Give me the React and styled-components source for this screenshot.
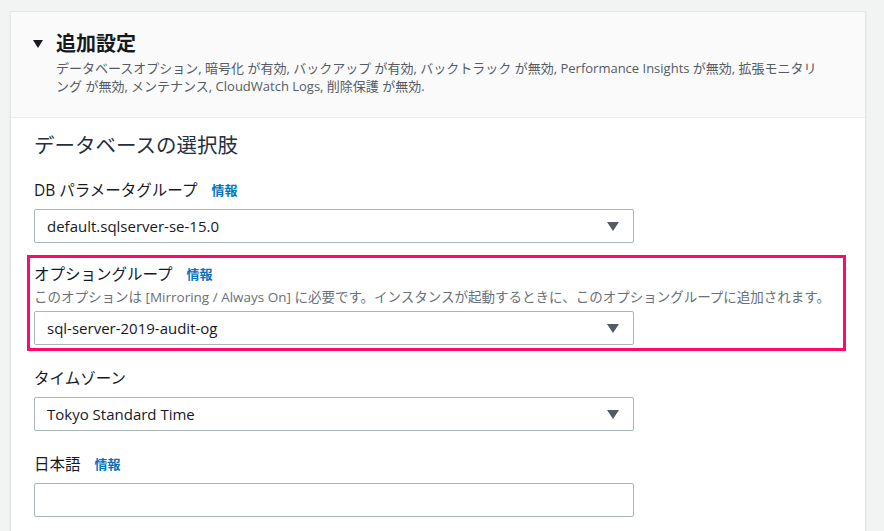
import React from "react";
import styled, { createGlobalStyle } from "styled-components";

const GlobalStyle = createGlobalStyle`
  body {
    margin: 0;
    background: #f2f3f3;
    font-family: "Open Sans", "Noto Sans CJK JP", sans-serif;
    color: #16191f;
  }
`;

const Page = styled.div`
  padding: 11px 0 0 10px;
  height: 520px;
  overflow: hidden;
`;

const Panel = styled.section`
  width: 856px;
  background: #fff;
  box-sizing: border-box;
  border: 1px solid #e3e6e6;
  border-bottom: none;
  box-shadow: 0 1px 1px 0 rgba(0, 28, 36, 0.15);
`;

const PanelHeader = styled.div`
  background: #fafafa;
  border-bottom: 1px solid #eaeded;
  padding: 20px 20px 22px 22px;
`;

const TitleRow = styled.div`
  display: flex;
  align-items: center;
  gap: 13px;
`;

const Title = styled.h2`
  margin: 0;
  font-size: 20px;
  line-height: 24px;
  font-weight: 700;
`;

const Summary = styled.p`
  margin: 3px 0 0 23px;
  font-size: 13px;
  line-height: 18px;
  color: #545b64;
`;

const PanelBody = styled.div`
  padding: 13px 19px 24px 23px;
  display: flex;
  flex-direction: column;
`;

const SectionHeading = styled.h3`
  margin: 0;
  font-size: 20.5px;
  line-height: 28px;
  font-weight: 400;
  color: #232f3e;
`;

const Field = styled.div`
  margin-top: ${(p) => p.$gap}px;
  ${(p) =>
    p.$highlight &&
    `
    margin-left: -7px;
    padding: 6px 4px 3px 4px;
    border: 3px solid #ff0a6c;
  `}
`;

const Label = styled.div`
  display: flex;
  align-items: center;
  font-size: 15.5px;
  line-height: 20px;
  margin-bottom: ${(p) => (p.$tight ? 4 : 9)}px;
`;

const Info = styled.a`
  margin-left: 14px;
  font-size: 13px;
  font-weight: 700;
  color: #0073bb;
  text-decoration: none;
`;

const Hint = styled.div`
  font-size: 13.5px;
  line-height: 18px;
  color: #687078;
  margin-bottom: 5px;
  white-space: nowrap;
`;

const SelectBox = styled.div`
  width: 600px;
  height: 34px;
  box-sizing: border-box;
  border: 1px solid #aab7b8;
  border-radius: 2px;
  background: #fff;
  display: flex;
  align-items: center;
  justify-content: space-between;
  padding: 0 14px 0 12px;
  font-size: 15px;
  color: #16191f;
`;

const Caret = () => (
  <svg width="12" height="9" viewBox="0 0 12 9">
    <polygon points="0,0 12,0 6,9" fill="#545b64" />
  </svg>
);

const Toggle = () => (
  <svg width="10" height="8" viewBox="0 0 10 8">
    <polygon points="0,0 10,0 5,8" fill="#16191f" />
  </svg>
);

const Select = ({ value }) => (
  <SelectBox>
    <span>{value}</span>
    <Caret />
  </SelectBox>
);

export default function App() {
  return (
    <Page>
      <GlobalStyle />
      <Panel>
        <PanelHeader>
          <TitleRow>
            <Toggle />
            <Title>追加設定</Title>
          </TitleRow>
          <Summary>
            データベースオプション, 暗号化 が有効, バックアップ が有効, バックトラック が無効, Performance Insights が無効, 拡張モニタリ
            <br />
            ング が無効, メンテナンス, CloudWatch Logs, 削除保護 が無効.
          </Summary>
        </PanelHeader>
        <PanelBody>
          <SectionHeading>データベースの選択肢</SectionHeading>

          <Field $gap={21}>
            <Label>
              DB パラメータグループ<Info href="#">情報</Info>
            </Label>
            <Select value="default.sqlserver-se-15.0" />
          </Field>

          <Field $gap={12} $highlight>
            <Label $tight>
              オプショングループ<Info href="#">情報</Info>
            </Label>
            <Hint>
              このオプションは [Mirroring / Always On] に必要です。インスタンスが起動するときに、このオプショングループに追加されます。
            </Hint>
            <Select value="sql-server-2019-audit-og" />
          </Field>

          <Field $gap={17}>
            <Label>タイムゾーン</Label>
            <Select value="Tokyo Standard Time" />
          </Field>

          <Field $gap={23}>
            <Label>
              日本語<Info href="#">情報</Info>
            </Label>
            <SelectBox />
          </Field>
        </PanelBody>
      </Panel>
    </Page>
  );
}
